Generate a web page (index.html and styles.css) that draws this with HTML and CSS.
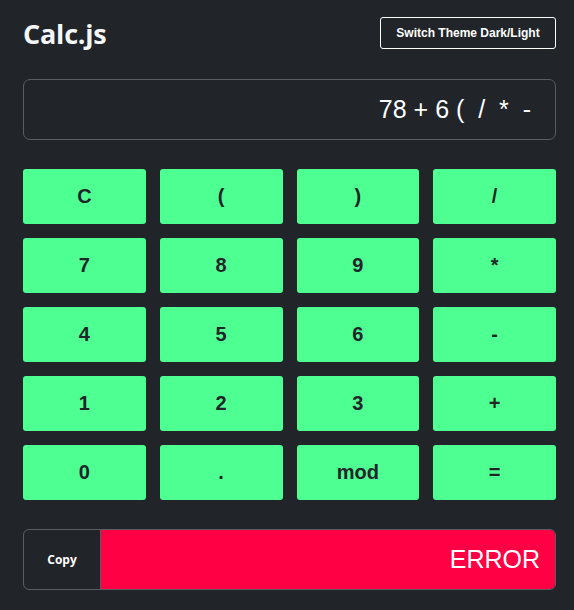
FILE: index.html
```html
<!DOCTYPE html>
<html>
<head>
<meta charset="utf-8">
<link rel="stylesheet" href="styles.css">
</head>
<body>
<div class="app">
  <header class="top">
    <h1 class="title">Calc.js</h1>
    <button class="theme">Switch Theme Dark/Light</button>
  </header>
  <div class="display">78 + 6 (&nbsp; /&nbsp; *&nbsp; -</div>
  <div class="keys">
    <button class="key">C</button>
    <button class="key">(</button>
    <button class="key">)</button>
    <button class="key">/</button>
    <button class="key">7</button>
    <button class="key">8</button>
    <button class="key">9</button>
    <button class="key">*</button>
    <button class="key">4</button>
    <button class="key">5</button>
    <button class="key">6</button>
    <button class="key">-</button>
    <button class="key">1</button>
    <button class="key">2</button>
    <button class="key">3</button>
    <button class="key">+</button>
    <button class="key">0</button>
    <button class="key">.</button>
    <button class="key">mod</button>
    <button class="key">=</button>
  </div>
  <div class="result">
    <button class="copy">Copy</button>
    <div class="output">ERROR</div>
  </div>
</div>
</body>
</html>
```

FILE: styles.css
```css
html, body {
  margin: 0;
  padding: 0;
  background: #212429;
}
.app {
  width: 533px;
  padding: 17px 0 0 23px;
  font-family: "Liberation Sans", Arial, sans-serif;
  color: #ffffff;
}
.top {
  display: flex;
  justify-content: space-between;
  align-items: center;
  height: 32px;
}
.title {
  margin: 0;
  font-family: "Open Sans", "Noto Sans", sans-serif;
  font-weight: 700;
  font-size: 27px;
  letter-spacing: -0.2px;
  color: #f4f6f8;
}
.theme {
  width: 176px;
  height: 32px;
  background: transparent;
  border: 1px solid #ffffff;
  border-radius: 3px;
  color: #ffffff;
  font-family: "Liberation Sans", Arial, sans-serif;
  font-weight: 700;
  font-size: 12px;
  padding: 0;
}
.display {
  margin-top: 30px;
  height: 61px;
  box-sizing: border-box;
  border: 1px solid #5a5d62;
  border-radius: 7px;
  display: flex;
  align-items: center;
  justify-content: flex-end;
  padding-right: 24px;
  font-size: 25px;
  white-space: pre;
  color: #ffffff;
}
.keys {
  margin-top: 29px;
  display: grid;
  grid-template-columns: repeat(4, 1fr);
  column-gap: 14px;
  row-gap: 14px;
}
.key {
  height: 55px;
  background: #4eff91;
  border: none;
  border-radius: 3px;
  color: #212529;
  font-family: "Liberation Sans", Arial, sans-serif;
  font-weight: 700;
  font-size: 20px;
  padding: 0;
}
.result {
  margin-top: 29px;
  height: 61px;
  display: flex;
  box-sizing: border-box;
  border: 1px solid #5a5d62;
  border-radius: 6px;
  overflow: hidden;
}
.copy {
  width: 77px;
  background: transparent;
  border: none;
  border-right: 1px solid #5a5d62;
  color: #ffffff;
  font-family: "Open Sans", "Noto Sans", sans-serif;
  font-weight: 700;
  font-size: 12px;
  padding: 0;
}
.output {
  flex: 1;
  background: #ff0044;
  display: flex;
  align-items: center;
  justify-content: flex-end;
  padding-right: 15px;
  font-size: 25px;
  color: #ffffff;
}
```
